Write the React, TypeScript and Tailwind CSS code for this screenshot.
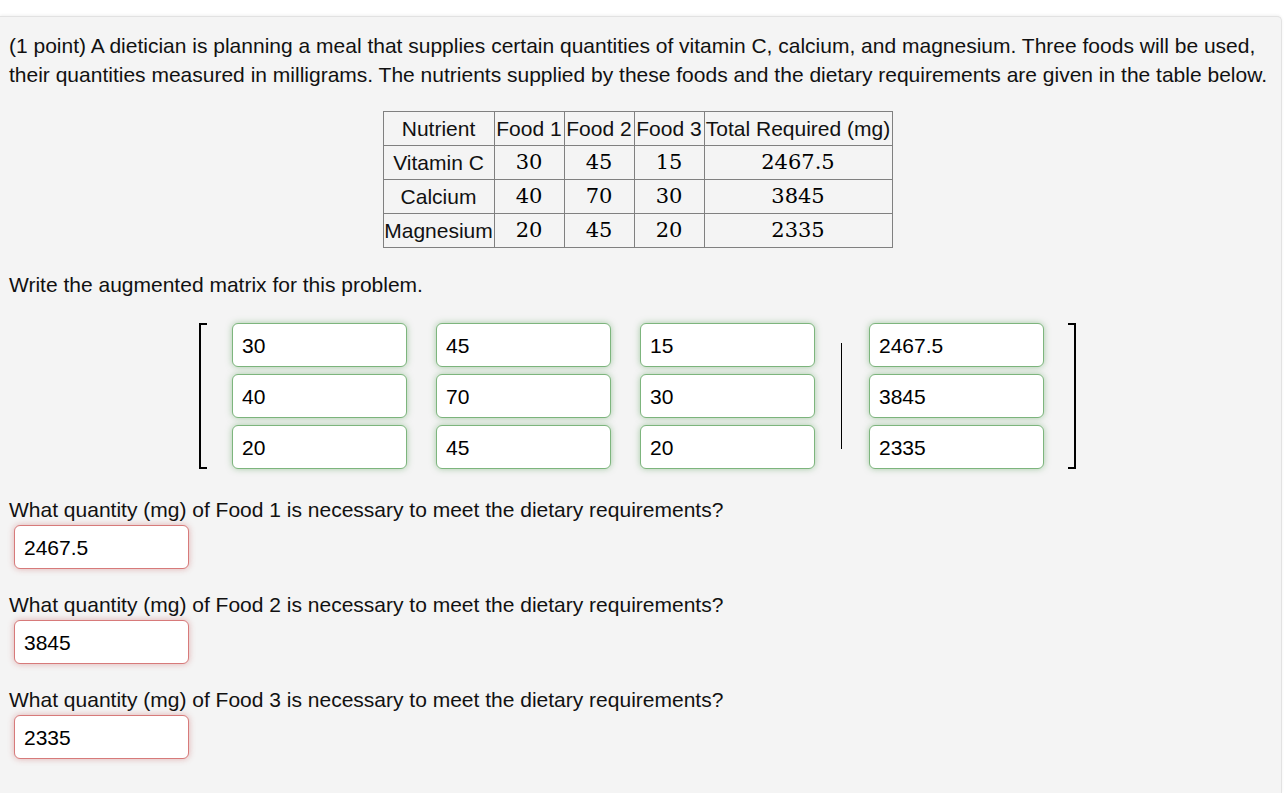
import React from "react";

const sans = { fontFamily: '"Liberation Sans", Arial, sans-serif' };

function MInput({ v, color }: { v: string; color: "green" | "red" }) {
  const cls =
    color === "green"
      ? "border-[#7db57d] shadow-[0_0_6px_rgba(90,160,90,0.5)]"
      : "border-[#d77a7a] shadow-[0_0_6px_rgba(200,90,90,0.45)]";
  return (
    <div
      className={`h-[44px] w-[175px] rounded-[6px] border bg-white pl-[9px] flex items-center text-[21px] text-black ${cls}`}
    >
      {v}
    </div>
  );
}

export default function App() {
  const rows = [
    ["Vitamin C", "30", "45", "15", "2467.5"],
    ["Calcium", "40", "70", "30", "3845"],
    ["Magnesium", "20", "45", "20", "2335"],
  ];
  const cols = [
    ["30", "40", "20"],
    ["45", "70", "45"],
    ["15", "30", "20"],
  ];
  const rhs = ["2467.5", "3845", "2335"];
  const qs = [
    ["Food 1", "2467.5"],
    ["Food 2", "3845"],
    ["Food 3", "2335"],
  ];
  return (
    <div className="w-[1285px] h-[793px] bg-white overflow-hidden" style={sans}>
      <div className="mt-[16px] w-[1282px] h-[777px] bg-[#f4f4f4] rounded-tr-[5px] border-r border-t border-[#e2e2e2] shadow-[0_-1px_3px_rgba(0,0,0,0.06)] pl-[9px] pr-[15px] pt-[14px] text-[21px] leading-[29px] text-[#111]">
        <p className="whitespace-nowrap">
          (1 point) A dietician is planning a meal that supplies certain quantities of vitamin C, calcium, and
          magnesium. Three foods will be used,
          <br />
          their quantities measured in milligrams. The nutrients supplied by these foods and the dietary requirements
          are given in the table below.
        </p>
        <table className="mx-auto mt-[22px] border-collapse border border-[#808080]">
          <thead>
            <tr className="h-[34px]">
              {["Nutrient", "Food 1", "Food 2", "Food 3", "Total Required (mg)"].map((h, i) => (
                <th
                  key={i}
                  className={`border border-[#808080] font-normal text-[21px] px-0 whitespace-nowrap ${
                    i === 0 ? "w-[111px]" : i === 4 ? "w-[188px]" : "w-[70px]"
                  }`}
                >
                  {h}
                </th>
              ))}
            </tr>
          </thead>
          <tbody>
            {rows.map((r, ri) => (
              <tr key={ri} className="h-[34px]">
                {r.map((c, ci) => (
                  <td
                    key={ci}
                    className={`border border-[#808080] text-center px-0 whitespace-nowrap ${
                      ci === 0 ? "text-[21px]" : "text-[21px] text-black"
                    }`}
                    style={ci === 0 ? undefined : { fontFamily: '"DejaVu Serif", "Liberation Serif", serif' }}
                  >
                    {c}
                  </td>
                ))}
              </tr>
            ))}
          </tbody>
        </table>
        <p className="mt-[22px]">Write the augmented matrix for this problem.</p>
        <div className="mt-[24px] flex items-center pl-[190px]">
          <div className="w-[8px] h-[146px] border-l-2 border-t-2 border-b-2 border-black" />
          <div className="flex ml-[25px] gap-[29px]">
            {cols.map((c, i) => (
              <div key={i} className="flex flex-col gap-[7px]">
                {c.map((v, j) => (
                  <MInput key={j} v={v} color="green" />
                ))}
              </div>
            ))}
          </div>
          <div className="ml-[26px] mr-[27px] w-[1px] h-[106px] bg-black" />
          <div className="flex flex-col gap-[7px]">
            {rhs.map((v, j) => (
              <MInput key={j} v={v} color="green" />
            ))}
          </div>
          <div className="ml-[24px] w-[8px] h-[146px] border-r-2 border-t-2 border-b-2 border-black" />
        </div>
        <div className="mt-[26px]">
          {qs.map(([f, v], i) => (
            <div key={i} className={i > 0 ? "mt-[21px]" : ""}>
              <p>What quantity (mg) of {f} is necessary to meet the dietary requirements?</p>
              <div className="ml-[5px] mt-[1px]">
                <MInput v={v} color="red" />
              </div>
            </div>
          ))}
        </div>
      </div>
    </div>
  );
}
